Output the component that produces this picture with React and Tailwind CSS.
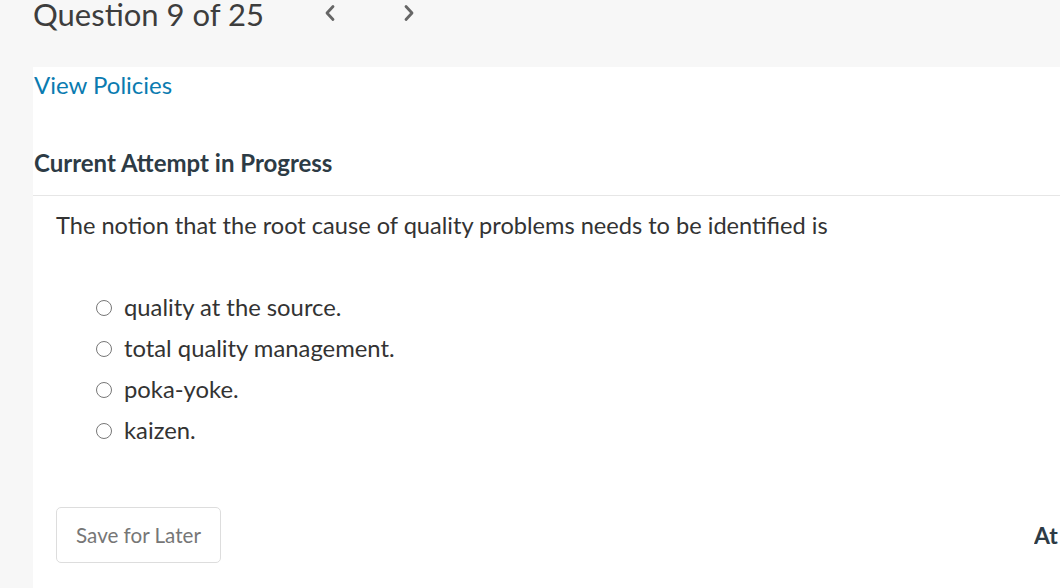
import React from "react";

function Radio() {
  return (
    <span className="inline-block w-[16px] h-[16px] rounded-full border border-[#777] bg-white shrink-0" />
  );
}

export default function App() {
  const opts = [
    "quality at the source.",
    "total quality management.",
    "poka-yoke.",
    "kaizen.",
  ];
  return (
    <div
      className="w-[1060px] h-[588px] bg-[#f7f7f7] overflow-hidden flex flex-col"
      style={{ fontFamily: "Lato, 'Open Sans', sans-serif" }}
    >
      <div className="h-[67px] shrink-0 flex items-start pl-[33px] pt-[1px]">
        <div className="text-[31px] leading-[26px] text-[#3d3d3d] w-[291px] whitespace-nowrap">
          Question 9 of 25
        </div>
        <div className="flex items-center mt-[3px] gap-[67px]">
          <svg width="12" height="18" viewBox="0 0 12 18" fill="none" stroke="#666" strokeWidth="2.8" strokeLinecap="round" strokeLinejoin="round">
            <path d="M9 2.5 L3 9 L9 15.5" />
          </svg>
          <svg width="12" height="18" viewBox="0 0 12 18" fill="none" stroke="#666" strokeWidth="2.8" strokeLinecap="round" strokeLinejoin="round">
            <path d="M3 2.5 L9 9 L3 15.5" />
          </svg>
        </div>
      </div>
      <div className="ml-[33px] flex-1 bg-white flex flex-col">
        <div className="pl-[1px] pt-[4px] text-[24px] leading-[28px] text-[#0a7bb0]">
          View Policies
        </div>
        <div className="pl-[1px] mt-[50px] text-[24px] leading-[28px] font-bold text-[#2d3b45]">
          Current Attempt in Progress
        </div>
        <div className="mt-[18px] border-t border-[#e6e6e6]" />
        <div className="pl-[23px] pt-[15px] text-[23.6px] leading-[28px] text-[#333]">
          The notion that the root cause of quality problems needs to be identified is
        </div>
        <div className="pl-[63px] mt-[48px] flex flex-col">
          {opts.map((o, i) => (
            <label key={i} className="flex items-center h-[41px] text-[23.8px] text-[#333]">
              <Radio />
              <span className="ml-[12px]">{o}</span>
            </label>
          ))}
        </div>
        <div className="flex items-center justify-between mt-[56px] pl-[23px]">
          <button className="w-[165px] h-[56px] border border-[#dddddd] rounded-[5px] bg-white text-[20.6px] text-[#767676]">
            Save for Later
          </button>
          <div className="text-[23px] font-bold text-[#2d3b45] whitespace-nowrap w-[26px] overflow-hidden">
            At
          </div>
        </div>
      </div>
    </div>
  );
}
